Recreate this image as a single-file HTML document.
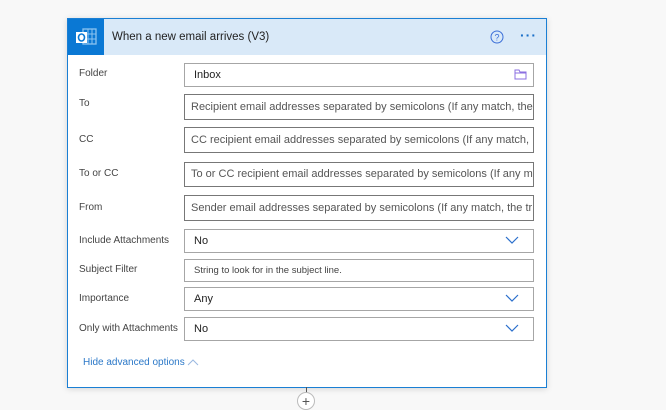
<!DOCTYPE html>
<html><head><style>
body{margin:0;width:666px;height:402px;background:#f8f8f8;font-family:"Liberation Sans",sans-serif;position:relative;overflow:hidden}
.card{position:absolute;left:67px;top:18px;width:478px;height:368px;background:#fff;border:1px solid #1a7fd4;box-shadow:0 1px 6px rgba(0,0,0,.15)}
.hdr{position:absolute;left:0;top:0;width:478px;height:36px;background:#d9e9f8}
.ico{position:absolute;left:0;top:0;width:36px;height:36px;background:#0a78d4}
.title{position:absolute;left:44px;top:12px;font-size:11.5px;color:#222}
.lbl{position:absolute;left:11px;font-size:10px;color:#444}
.box{position:absolute;left:116px;width:350px;border:1px solid #a6a6a6;box-sizing:border-box;font-size:11px;color:#222;padding-left:9px;white-space:nowrap;overflow:hidden}
.dk{border-color:#777;color:#555;padding-left:6px}
.chev{position:absolute;right:14px;top:6px}
</style></head><body>
<div class="card">
<div class="hdr"><div class="ico">
<svg width="36" height="36"><rect x="15" y="10" width="13" height="15" fill="none" stroke="#8cc4f0" stroke-width="1.3"/><path d="M15 15h13M15 20h13M20 10v15M24 10v15" stroke="#8cc4f0" stroke-width="1"/><rect x="8" y="13" width="11" height="11" fill="#fff"/><ellipse cx="13.5" cy="18.5" rx="3" ry="3.5" fill="none" stroke="#0a78d4" stroke-width="1.6"/></svg></div>
<div class="title">When a new email arrives (V3)</div>
<svg style="position:absolute;left:422px;top:11px" width="14" height="14"><circle cx="7" cy="7" r="6" fill="none" stroke="#3b6fd8" stroke-width="1"/><text x="7" y="10.5" font-size="9" text-anchor="middle" fill="#3b6fd8" font-family="Liberation Sans">?</text></svg>
<div style="position:absolute;left:452px;top:8px;font-size:14px;color:#1a6fc8;letter-spacing:1px;font-weight:bold">···</div>
</div>
<div class="lbl" style="top:49px">Folder</div>
<div class="box" style="top:44px;height:24px;line-height:22px">Inbox<svg style="position:absolute;right:6px;top:5px" width="13" height="11"><path d="M1 1h4l1 2h6v7H1z" fill="none" stroke="#8b6fe0"/><path d="M1 4h11" stroke="#8b6fe0"/></svg></div>
<div class="lbl" style="top:79px">To</div>
<div class="box dk" style="top:75px;height:26px;line-height:24px">Recipient email addresses separated by semicolons (If any match, the</div>
<div class="lbl" style="top:115px">CC</div>
<div class="box dk" style="top:108px;height:26px;line-height:24px">CC recipient email addresses separated by semicolons (If any match,</div>
<div class="lbl" style="top:149px">To or CC</div>
<div class="box dk" style="top:143px;height:25px;line-height:23px">To or CC recipient email addresses separated by semicolons (If any m</div>
<div class="lbl" style="top:183px">From</div>
<div class="box dk" style="top:176px;height:26px;line-height:24px">Sender email addresses separated by semicolons (If any match, the tr</div>
<div class="lbl" style="top:216px">Include Attachments</div>
<div class="box" style="top:210px;height:24px;line-height:22px">No<svg class="chev" width="14" height="9"><path d="M1 1l6 6 6-6" fill="none" stroke="#2a6fcc" stroke-width="1.2"/></svg></div>
<div class="lbl" style="top:245px">Subject Filter</div>
<div class="box" style="top:240px;height:23px;line-height:21px;font-size:9.5px;color:#444">String to look for in the subject line.</div>
<div class="lbl" style="top:274px">Importance</div>
<div class="box" style="top:268px;height:24px;line-height:22px">Any<svg class="chev" width="14" height="9"><path d="M1 1l6 6 6-6" fill="none" stroke="#2a6fcc" stroke-width="1.2"/></svg></div>
<div class="lbl" style="top:304px">Only with Attachments</div>
<div class="box" style="top:298px;height:24px;line-height:22px">No<svg class="chev" width="14" height="9"><path d="M1 1l6 6 6-6" fill="none" stroke="#2a6fcc" stroke-width="1.2"/></svg></div>
<div style="position:absolute;left:15px;top:338px;font-size:10px;color:#2b78c8">Hide advanced options</div>
<svg style="position:absolute;left:119px;top:339px" width="12" height="8"><path d="M1 7l5-5 5 5" fill="none" stroke="#9ab8e0" stroke-width="1"/></svg>
</div>
<div style="position:absolute;left:306px;top:387px;width:1px;height:6px;background:#555"></div>
<div style="position:absolute;left:297px;top:392px;width:18px;height:18px;border-radius:50%;border:1px solid #bbb;background:#fff;box-sizing:border-box;text-align:center;font-size:14px;line-height:16px;color:#555">+</div>
</body></html>
